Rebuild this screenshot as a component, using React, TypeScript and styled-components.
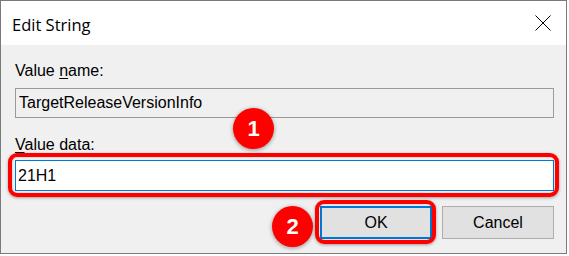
import React, { FC } from "react";
import styled, { createGlobalStyle } from "styled-components";

const GlobalStyle = createGlobalStyle`
  html, body {
    margin: 0;
    padding: 0;
    background: #ffffff;
  }
  body {
    font-family: "Liberation Sans", Arial, sans-serif;
    font-size: 16px;
    color: #000;
  }
`;

const Window = styled.div`
  position: relative;
  box-sizing: border-box;
  width: 567px;
  height: 254px;
  border: 1px solid #7a7a7a;
  background: #f0f0f0;
`;

const TitleBar = styled.div`
  display: flex;
  align-items: center;
  justify-content: space-between;
  height: 44px;
  background: #ffffff;
`;

const Title = styled.span`
  padding: 2px 0 0 11px;
  font-family: "Open Sans", "Noto Sans", sans-serif;
  font-size: 16.5px;
  color: #000;
`;

const CloseButton = styled.div`
  display: flex;
  align-items: center;
  justify-content: center;
  width: 46px;
  height: 44px;
`;

const Body = styled.div`
  display: flex;
  flex-direction: column;
  padding: 17px 12px 0 14px;
`;

const Label = styled.label<{ $gap?: number }>`
  display: block;
  line-height: 18px;
  margin-top: ${(p) => p.$gap ?? 0}px;

  u {
    text-decoration: underline;
    text-underline-offset: 2px;
  }
`;

const TextBox = styled.div<{ $active?: boolean; $h: number }>`
  box-sizing: border-box;
  display: flex;
  align-items: center;
  height: ${(p) => p.$h}px;
  padding-left: ${(p) => (p.$active ? 2 : 3)}px;
  border: 1px solid ${(p) => (p.$active ? "#0078d7" : "#9a9a9a")};
  background: ${(p) => (p.$active ? "#ffffff" : "#f0f0f0")};
  line-height: 18px;
`;

const Anchor = styled.div<{ $gap?: number }>`
  position: relative;
  margin-top: ${(p) => p.$gap ?? 0}px;
`;

const Highlight = styled.div<{ $t: number; $r: number; $b: number; $l: number }>`
  position: absolute;
  top: ${(p) => p.$t}px;
  right: ${(p) => p.$r}px;
  bottom: ${(p) => p.$b}px;
  left: ${(p) => p.$l}px;
  border: 4px solid #ff0000;
  border-radius: 9px;
  box-shadow: 0 1px 3px rgba(0, 0, 0, 0.35), inset 0 0 2px rgba(0, 0, 0, 0.25);
  pointer-events: none;
`;

const ButtonRow = styled.div`
  display: flex;
  justify-content: flex-end;
  gap: 10px;
  margin-top: 15px;
`;

const Button = styled.button<{ $default?: boolean }>`
  box-sizing: border-box;
  width: 112px;
  height: 33px;
  padding: 0;
  font-family: "Liberation Sans", Arial, sans-serif;
  font-size: 16px;
  color: #000;
  background: #e1e1e1;
  border: 1px solid ${(p) => (p.$default ? "#0078d7" : "#adadad")};
  box-shadow: ${(p) => (p.$default ? "inset 0 0 0 1px #0078d7" : "none")};
`;

const Badge = styled.div<{ $x: number; $y: number }>`
  position: absolute;
  left: ${(p) => p.$x}px;
  top: ${(p) => p.$y}px;
  width: 41px;
  height: 41px;
  border-radius: 50%;
  background: #ff0000;
  color: #ffffff;
  display: flex;
  align-items: center;
  justify-content: center;
  font-family: "Liberation Sans", Arial, sans-serif;
  font-weight: bold;
  font-size: 22px;
  box-shadow: 0 1px 4px rgba(0, 0, 0, 0.4);
`;

const CloseIcon: FC = () => (
  <svg width="16" height="16" viewBox="0 0 16 16">
    <path d="M0.5 0.5 L15.5 15.5 M15.5 0.5 L0.5 15.5" stroke="#000" strokeWidth="1" fill="none" />
  </svg>
);

const App: FC = () => {
  return (
    <>
      <GlobalStyle />
      <Window>
        <TitleBar>
          <Title>Edit String</Title>
          <CloseButton>
            <CloseIcon />
          </CloseButton>
        </TitleBar>
        <Body>
          <Label>
            Value <u>n</u>ame:
          </Label>
          <Anchor $gap={8}>
            <TextBox $h={30}>TargetReleaseVersionInfo</TextBox>
          </Anchor>
          <Label $gap={18}>
            <u>V</u>alue data:
          </Label>
          <Anchor $gap={6}>
            <TextBox $active $h={31}>21H1</TextBox>
            <Highlight $t={-7} $r={-5} $b={-6} $l={-7} />
          </Anchor>
          <ButtonRow>
            <Anchor>
              <Button $default>OK</Button>
              <Highlight $t={-6} $r={-4} $b={-5} $l={-5} />
            </Anchor>
            <Button>Cancel</Button>
          </ButtonRow>
        </Body>
        <Badge $x={232} $y={107}>1</Badge>
        <Badge $x={271} $y={205}>2</Badge>
      </Window>
    </>
  );
};

export default App;
